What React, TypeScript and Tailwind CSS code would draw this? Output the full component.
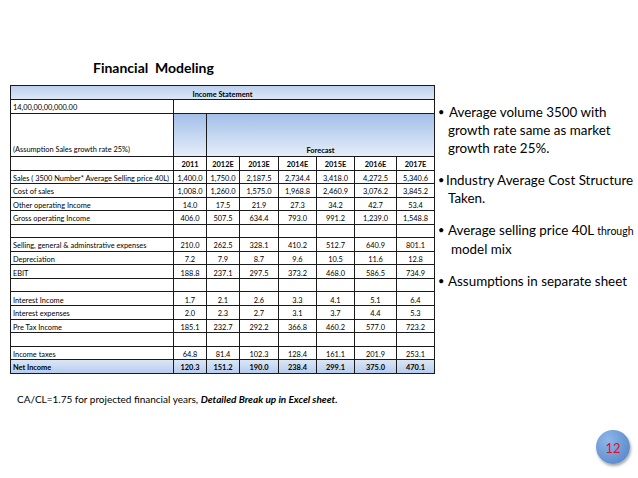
import React from 'react';

const cols = 'grid grid-cols-[163px_33px_33px_39px_38px_38px_42px_38px]';
const years = ['2011', '2012E', '2013E', '2014E', '2015E', '2016E', '2017E'];

type Row = string[] | null;

const rows: Row[] = [
  ['Sales ( 3500 Number* Average Selling price 40L)', '1,400.0', '1,750.0', '2,187.5', '2,734.4', '3,418.0', '4,272.5', '5,340.6'],
  ['Cost of sales', '1,008.0', '1,260.0', '1,575.0', '1,968.8', '2,460.9', '3,076.2', '3,845.2'],
  ['Other operating Income', '14.0', '17.5', '21.9', '27.3', '34.2', '42.7', '53.4'],
  ['Gross operating Income', '406.0', '507.5', '634.4', '793.0', '991.2', '1,239.0', '1,548.8'],
  null,
  ['Selling, general & adminstrative expenses', '210.0', '262.5', '328.1', '410.2', '512.7', '640.9', '801.1'],
  ['Depreciation', '7.2', '7.9', '8.7', '9.6', '10.5', '11.6', '12.8'],
  ['EBIT', '188.8', '237.1', '297.5', '373.2', '468.0', '586.5', '734.9'],
  null,
  ['Interest Income', '1.7', '2.1', '2.6', '3.3', '4.1', '5.1', '6.4'],
  ['Interest expenses', '2.0', '2.3', '2.7', '3.1', '3.7', '4.4', '5.3'],
  ['Pre Tax Income', '185.1', '232.7', '292.2', '366.8', '460.2', '577.0', '723.2'],
  null,
  ['Income taxes', '64.8', '81.4', '102.3', '128.4', '161.1', '201.9', '253.1'],
];

const net = ['Net Income', '120.3', '151.2', '190.0', '238.4', '299.1', '375.0', '470.1'];

const cell = 'h-[13.56px] border-r border-b border-[#1a1a1a] flex items-end pb-px leading-none whitespace-nowrap overflow-hidden';

function DataRow({ row, bold }: { row: string[]; bold?: boolean }) {
  return (
    <>
      {row.map((v, i) => (
        <div
          key={i}
          className={`${cell} ${i === 0 ? 'justify-start pl-[2px]' : 'justify-center'} ${bold ? 'font-bold' : ''}`}
        >
          {v}
        </div>
      ))}
    </>
  );
}

function Bullet({ children, className = '' }: { children: React.ReactNode; className?: string }) {
  return (
    <div className={`flex ${className}`}>
      <span className="w-[10px] shrink-0 text-[11px]">•</span>
      <div className="flex-1">{children}</div>
    </div>
  );
}

export default function App() {
  return (
    <div className="w-[638px] h-[478px] bg-white text-black font-['Lato','Noto_Sans',sans-serif] flex flex-col">
      <h1 className="pt-[58px] pl-[93px] text-[14px] leading-[20px] font-bold whitespace-pre">
        Financial  Modeling
      </h1>

      <div className="flex items-start mt-[7px]">
        <div className={`${cols} ml-[10px] shrink-0 border-l border-t border-[#1a1a1a] text-[7.4px]`}>
          <div className="col-span-8 h-[14px] border-r border-b border-[#1a1a1a] bg-linear-to-b from-[#bcd0ee] to-[#dde7f6] flex items-end justify-center pb-px font-bold leading-none">
            Income Statement
          </div>

          <div className="h-[14px] border-r border-b border-[#1a1a1a] flex items-end pl-[2px] pb-[2px] leading-none">
            14,00,00,00,000.00
          </div>
          <div className="col-span-7 h-[14px] border-r border-b border-[#1a1a1a]" />

          <div className="h-[43px] border-r border-b border-[#1a1a1a] flex items-end pl-[2px] pb-[3px] leading-none">
            (Assumption Sales growth rate 25%)
          </div>
          <div className="h-[43px] border-r border-b border-[#1a1a1a] bg-linear-to-b from-[#a3bfe8] to-[#e6eef9]" />
          <div className="col-span-6 h-[43px] border-r border-b border-[#1a1a1a] bg-linear-to-b from-[#a3bfe8] to-[#e6eef9] flex items-end justify-center pb-[2px] font-bold leading-none">
            Forecast
          </div>

          <DataRow row={['', ...years]} bold />
          {rows.map((r, i) =>
            r ? <DataRow key={i} row={r} /> : <DataRow key={i} row={['', '', '', '', '', '', '', '']} />
          )}
          <div className="col-span-8 grid grid-cols-subgrid bg-linear-to-b from-[#dbe6f6] to-[#b4cbec]">
            <DataRow row={net} bold />
          </div>
        </div>

        <div className="ml-[3px] mt-[18px] text-[13.4px] leading-[18px] whitespace-nowrap">
          <Bullet>
            <div className="pl-[1px]">Average volume 3500 with</div>
            <div>growth rate same as market</div>
            <div>growth rate 25%.</div>
          </Bullet>
          <Bullet className="mt-[14px]">
            <div className="-ml-[2px]">Industry Average Cost Structure</div>
            <div>Taken.</div>
          </Bullet>
          <Bullet className="mt-[14px]">
            <div>
              Average selling price 40L <span className="text-[10.5px]">through</span>
            </div>
            <div className="pl-[3px]">model mix</div>
          </Bullet>
          <Bullet className="mt-[14px]">
            <div>Assumptions in separate sheet</div>
          </Bullet>
        </div>
      </div>

      <p className="mt-[19px] pl-[17px] text-[10px] leading-[12px]">
        CA/CL=1.75 for projected financial years, <b className="italic">Detailed Break up in Excel sheet.</b>
      </p>

      <div className="flex justify-end pr-[8px] mt-[25px]">
        <div className="w-[34px] h-[34px] rounded-full bg-radial-[at_35%_30%] from-[#8fb6ea] to-[#4d80c4] shadow-[1px_2px_3px_rgba(0,0,0,0.35)] flex items-center justify-center pt-[4px] text-[13px] text-[#e0101c]">
          12
        </div>
      </div>
    </div>
  );
}
